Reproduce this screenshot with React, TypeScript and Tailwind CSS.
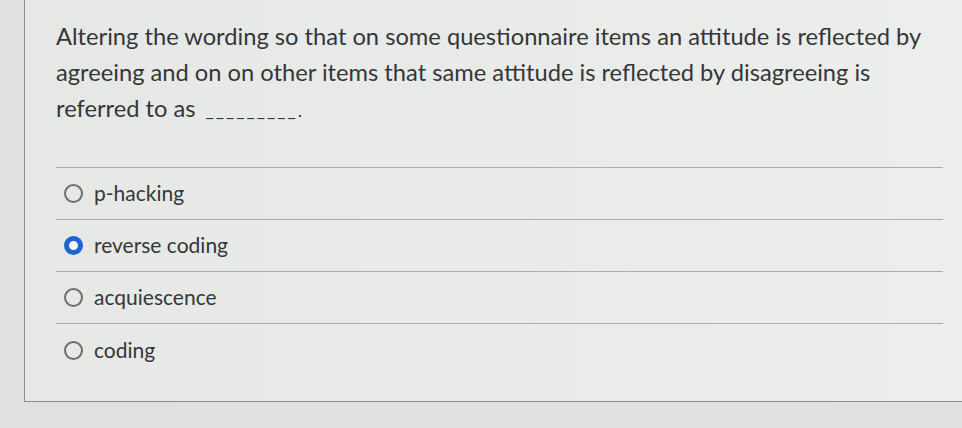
const options = [
  { id: 'p-hacking', label: 'p-hacking' },
  { id: 'reverse', label: 'reverse coding' },
  { id: 'acquiescence', label: 'acquiescence' },
  { id: 'coding', label: 'coding' },
];

const Radio = ({ checked }: { checked: boolean }) =>
  checked ? (
    <span className="block w-[19px] h-[19px] rounded-full border-[5px] border-[#1d63d6] bg-white shrink-0" />
  ) : (
    <span className="block w-[19px] h-[19px] rounded-full border-2 border-[#6b6d6f] shrink-0" />
  );

const App = () => {
  const selected = 'reverse';

  return (
    <div className="w-full h-[428px] overflow-hidden bg-[#dfe1de] pl-[24px] font-['Lato',sans-serif] text-[#35363a]">
      <div className="w-[938px] h-[402px] border-l border-b border-[#8b8d8b] bg-gradient-to-r from-[#e6e8e5] to-[#eceeeb] pl-[31px] pr-[19px] pt-[18px]">
        <p className="text-[23.7px] leading-[36px] max-w-[875px]">
          Altering the wording so that on some questionnaire items an attitude is reflected by agreeing and on on other
          items that same attitude is reflected by disagreeing is referred to as
          <span className="ml-[10px] text-[18px] tracking-[2px]">_________.</span>
        </p>
        <div className="mt-[39px] border-t border-[#abadab]">
          {options.map((option, index) => (
            <label
              key={option.id}
              className={`flex items-center gap-[11px] h-[52px] pl-[8px] ${
                index < options.length - 1 ? 'border-b border-[#abadab]' : ''
              }`}
            >
              <Radio checked={option.id === selected} />
              <span className="text-[21px] leading-none pb-[2px]">{option.label}</span>
            </label>
          ))}
        </div>
      </div>
    </div>
  );
};

export default App;
